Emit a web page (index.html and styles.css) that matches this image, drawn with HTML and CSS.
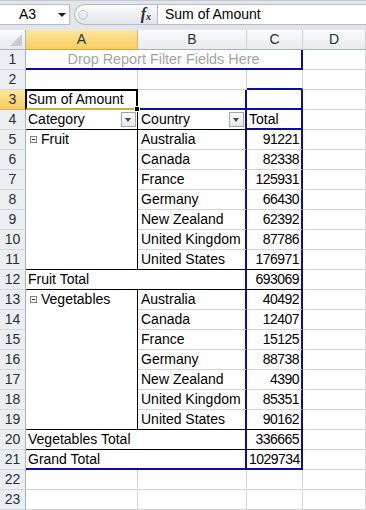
FILE: index.html
```html
<!DOCTYPE html>
<html>
<head>
<meta charset="utf-8">
<link rel="stylesheet" href="styles.css">
</head>
<body>
<div class="fbar">
  <div class="namebox"><span class="ref">A3</span><span class="nb-arrow"></span></div>
  <div class="pill"><span class="grip"></span><span class="fx"><i>f</i><sub>x</sub></span></div>
  <div class="formula">Sum of Amount</div>
</div>
<div class="sheet">
  <div class="corner"><span class="tri"></span></div>
  <div class="ch sel">A</div><div class="ch">B</div><div class="ch">C</div><div class="ch">D</div>

  <div class="rh">1</div>
  <div class="c span3 drop bb-blue br-blue">Drop Report Filter Fields Here</div>
  <div class="c"></div>

  <div class="rh">2</div>
  <div class="c"></div><div class="c"></div><div class="c bb-blue"></div><div class="c"></div>

  <div class="rh sel">3</div>
  <div class="c active bb-blue">Sum of Amount<span class="selbox"><span class="handle"></span></span></div>
  <div class="c bb-blue br-blue"></div>
  <div class="c bb-blue br-blue"></div>
  <div class="c"></div>

  <div class="rh">4</div>
  <div class="c hd bb-black br-black"><span>Category</span><span class="dd"></span></div>
  <div class="c hd bcol bb-black br-blue"><span>Country</span><span class="dd"></span></div>
  <div class="c bb-blue br-blue">Total</div>
  <div class="c"></div>

  <div class="rh">5</div>
  <div class="c grp bb-black br-black"><span class="mb"></span>Fruit</div>
  <div class="c bcol br-blue">Australia</div><div class="c num br-blue">91221</div><div class="c"></div>
  <div class="rh">6</div>
  <div class="c bcol br-blue">Canada</div><div class="c num br-blue">82338</div><div class="c"></div>
  <div class="rh">7</div>
  <div class="c bcol br-blue">France</div><div class="c num br-blue">125931</div><div class="c"></div>
  <div class="rh">8</div>
  <div class="c bcol br-blue">Germany</div><div class="c num br-blue">66430</div><div class="c"></div>
  <div class="rh">9</div>
  <div class="c bcol br-blue">New Zealand</div><div class="c num br-blue">62392</div><div class="c"></div>
  <div class="rh">10</div>
  <div class="c bcol br-blue">United Kingdom</div><div class="c num br-blue">87786</div><div class="c"></div>
  <div class="rh">11</div>
  <div class="c bcol br-blue bb-black">United States</div><div class="c num br-blue bb-black">176971</div><div class="c"></div>

  <div class="rh">12</div>
  <div class="c span2 bb-black br-blue">Fruit Total</div>
  <div class="c num bb-black br-blue">693069</div>
  <div class="c"></div>

  <div class="rh">13</div>
  <div class="c grp bb-black br-black"><span class="mb"></span>Vegetables</div>
  <div class="c bcol br-blue">Australia</div><div class="c num br-blue">40492</div><div class="c"></div>
  <div class="rh">14</div>
  <div class="c bcol br-blue">Canada</div><div class="c num br-blue">12407</div><div class="c"></div>
  <div class="rh">15</div>
  <div class="c bcol br-blue">France</div><div class="c num br-blue">15125</div><div class="c"></div>
  <div class="rh">16</div>
  <div class="c bcol br-blue">Germany</div><div class="c num br-blue">88738</div><div class="c"></div>
  <div class="rh">17</div>
  <div class="c bcol br-blue">New Zealand</div><div class="c num br-blue">4390</div><div class="c"></div>
  <div class="rh">18</div>
  <div class="c bcol br-blue">United Kingdom</div><div class="c num br-blue">85351</div><div class="c"></div>
  <div class="rh">19</div>
  <div class="c bcol br-blue bb-black">United States</div><div class="c num br-blue bb-black">90162</div><div class="c"></div>

  <div class="rh">20</div>
  <div class="c span2 bb-black br-blue">Vegetables Total</div>
  <div class="c num bb-black br-blue">336665</div>
  <div class="c"></div>

  <div class="rh">21</div>
  <div class="c span2 bb-blue br-blue">Grand Total</div>
  <div class="c num bb-blue br-blue">1029734</div>
  <div class="c"></div>

  <div class="rh">22</div>
  <div class="c"></div><div class="c"></div><div class="c"></div><div class="c"></div>
  <div class="rh">23</div>
  <div class="c"></div><div class="c"></div><div class="c"></div><div class="c"></div>
</div>
</body>
</html>
```

FILE: styles.css
```css
* { box-sizing: border-box; }
html, body { margin: 0; padding: 0; }
body {
  width: 366px;
  height: 510px;
  overflow: hidden;
  background: #fff;
  font-family: "Liberation Sans", Arial, sans-serif;
  font-size: 14px;
  color: #000;
}

/* formula bar */
.fbar {
  height: 30px;
  display: flex;
  align-items: stretch;
  background: #e2e6eb;
  border-top: 1px solid #c5cbd3;
  padding: 3px 0 5px 0;
}
.namebox {
  width: 70px;
  background: #fff;
  border: 1px solid #b4bcc6;
  border-left: none;
  display: flex;
  align-items: center;
}
.ref { padding-left: 19px; line-height: 19px; }
.nb-arrow {
  margin-left: auto;
  margin-right: 3px;
  width: 0; height: 0;
  border-left: 4px solid transparent;
  border-right: 4px solid transparent;
  border-top: 4px solid #1e1e1e;
}
.pill {
  margin-left: 4px;
  width: 83px;
  display: flex;
  align-items: center;
  border: 1px solid #b4bcc6;
  border-right: none;
  border-radius: 11px 0 0 11px;
  background: linear-gradient(#fbfcfd, #e1e5ea);
}
.grip {
  width: 10px; height: 10px;
  margin-left: 3px;
  border-radius: 50%;
  border: 1px solid #c3c9d1;
  background: linear-gradient(#f4f6f8, #dfe4ea);
}
.fx {
  margin-left: auto;
  margin-right: 6px;
  font-family: "Liberation Serif", "Times New Roman", serif;
  font-weight: bold;
  font-size: 16px;
  color: #2a2a2a;
  line-height: 15px;
}
.fx i { font-style: italic; }
.fx sub { font-size: 10px; font-style: italic; vertical-align: -1px; }
.formula {
  flex: 1;
  background: #fff;
  border: 1px solid #b4bcc6;
  border-right: none;
  padding-left: 7px;
  line-height: 19px;
}

/* sheet */
.sheet {
  display: grid;
  grid-template-columns: 26px 112px 109px 56px 63px;
  grid-auto-rows: 20px;
}
.corner {
  position: relative;
  background: linear-gradient(#f9fafb, #e7eaee);
  border-right: 1px solid #a9b1bb;
  border-bottom: 1px solid #a9b1bb;
}
.tri {
  position: absolute;
  right: 3px;
  bottom: 3px;
  width: 12px;
  height: 12px;
  background: #c8ccd1;
  clip-path: polygon(100% 0, 100% 100%, 0 100%);
}
.ch {
  background: linear-gradient(#fafbfc, #e8ebef);
  border-right: 1px solid #cdd2d8;
  border-bottom: 1px solid #a9b1bb;
  text-align: center;
  line-height: 19px;
  color: #24303c;
}
.ch.sel {
  background: linear-gradient(#fde79c, #f8cd60);
  border-bottom-color: #d9a33f;
  border-right-color: #d9b36a;
}
.rh {
  background: #eceff2;
  border-right: 1px solid #a9b1bb;
  border-bottom: 1px solid #d3d8de;
  text-align: center;
  line-height: 19px;
  color: #24303c;
}
.rh.sel {
  background: linear-gradient(#fde79c, #f8cd60);
  border-right-color: #d9a33f;
  border-bottom-color: #e0b65c;
}

.c {
  border-right: 1px solid #d4d4d4;
  border-bottom: 1px solid #d4d4d4;
  padding: 0 2px;
  line-height: 19px;
  white-space: nowrap;
}
.bcol { padding-left: 3px; }
.num { text-align: right; padding-right: 2px; letter-spacing: -0.55px; }
.span2 { grid-column: span 2; }
.span3 { grid-column: span 3; }
.grp { grid-row: span 7; }
.drop { text-align: center; color: #a3a3a3; font-size: 14.4px; }

.bb-blue { border-bottom: 2px solid #0b0ba6; }
.br-blue { border-right: 2px solid #0b0ba6; }
.bb-black { border-bottom-color: #000; }
.br-black { border-right-color: #000; }

.hd {
  display: flex;
  align-items: center;
  justify-content: space-between;
  padding-right: 1px;
}
.dd {
  position: relative;
  width: 15px;
  height: 15px;
  border: 1px solid #a2a7ad;
  background: linear-gradient(#fdfdfd, #e4e7eb);
}
.dd::after {
  content: "";
  position: absolute;
  left: 3px;
  top: 5px;
  width: 0; height: 0;
  border-left: 3.5px solid transparent;
  border-right: 3.5px solid transparent;
  border-top: 4px solid #4a4a4a;
}

.mb {
  position: relative;
  display: inline-block;
  width: 7px;
  height: 7px;
  border: 1px solid #7f7f7f;
  margin: 0 4px 0 2px;
  vertical-align: 1px;
}
.mb::after {
  content: "";
  position: absolute;
  left: 1px;
  right: 1px;
  top: 2px;
  height: 1px;
  background: #333;
}

.active { position: relative; }
.selbox {
  position: absolute;
  left: -1px;
  top: -1px;
  right: -1px;
  bottom: -2px;
  border: 2px solid #000;
  border-bottom-color: #c2b23e;
  pointer-events: none;
}
.handle {
  position: absolute;
  right: -4px;
  bottom: -4px;
  width: 6px;
  height: 6px;
  background: #000;
  border: 1px solid #fff;
}
```
